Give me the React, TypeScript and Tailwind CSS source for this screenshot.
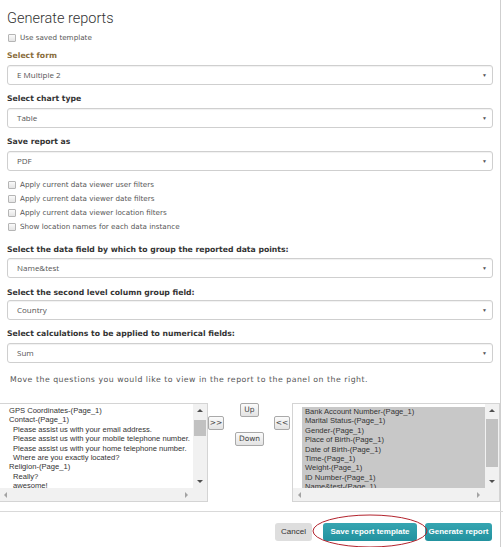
import React from 'react';

const labelCls = "h-[12px] flex items-center text-[7.7px] font-bold text-[#333] [font-family:'DejaVu_Sans',sans-serif]";

const Select = ({ value, className = '' }: { value: string; className?: string }) => (
  <div
    className={`h-[20px] w-[486px] flex items-center justify-between pl-[9px] pr-[5px] border border-[#cfcfcf] rounded-[3px] bg-white shadow-[inset_0_1px_1px_rgba(0,0,0,0.06)] ${className}`}
  >
    <span className="text-[8px] text-[#555] [font-family:'Open_Sans',sans-serif]">{value}</span>
    <span className="text-[5px] text-[#555] leading-none">▼</span>
  </div>
);

const Check = ({ label, className = '' }: { label: string; className?: string }) => (
  <div className={`h-[14px] flex items-center gap-[4px] ${className}`}>
    <span className="w-[8px] h-[8px] border border-[#b5b5b5] rounded-[1px] bg-gradient-to-b from-[#fafafa] to-[#e4e4e4]" />
    <span className="text-[7.2px] text-[#555] [font-family:'DejaVu_Sans',sans-serif]">{label}</span>
  </div>
);

const MiniBtn = ({ label, className = '' }: { label: string; className?: string }) => (
  <div
    className={`h-[14px] px-[3px] flex items-center justify-center border border-[#a9a9a9] rounded-[2px] bg-gradient-to-b from-[#fbfbfb] to-[#e3e3e3] text-[7.5px] text-[#444] [font-family:'DejaVu_Sans',sans-serif] ${className}`}
  >
    {label}
  </div>
);

type Item = { text: string; indent?: boolean };

const ListBox = ({
  items,
  selected,
  className = '',
  thumbTop,
  thumbH,
}: {
  items: Item[];
  selected?: boolean;
  className?: string;
  thumbTop: number;
  thumbH: number;
}) => (
  <div className={`h-[99px] flex flex-col border border-[#d4d4d4] bg-white ${className}`}>
    <div className="flex flex-1 min-h-0">
      <div className={`flex-1 min-w-0 overflow-hidden ${selected ? 'pl-[9px] pt-[3px]' : 'pl-[7px] pt-[2px]'}`}>
        <div className={`h-full pl-[3px] ${selected ? 'bg-[#c8c8c8]' : ''}`}>
          {items.map((it) => (
            <div
              key={it.text}
              className={`h-[9.4px] leading-[9.4px] whitespace-nowrap text-[7.6px] text-[#333] [font-family:'Liberation_Sans',Arial,sans-serif] ${it.indent ? 'pl-[4px]' : ''}`}
            >
              {it.text}
            </div>
          ))}
        </div>
      </div>
      <div className="w-[14px] relative bg-[#f1f1f1]">
        <span className="absolute top-[5px] left-[4px] w-0 h-0 border-x-[3px] border-x-transparent border-b-[3px] border-b-[#505050]" />
        <span
          className="absolute left-[1px] right-[1px] bg-[#c1c1c1]"
          style={{ top: thumbTop, height: thumbH }}
        />
        <span className="absolute bottom-[5px] left-[4px] w-0 h-0 border-x-[3px] border-x-transparent border-t-[3px] border-t-[#505050]" />
      </div>
    </div>
    <div className="h-[13px] flex">
      <div className="flex-1 flex items-center justify-between px-[5px] bg-[#f1f1f1]">
        <span className="w-0 h-0 border-y-[3px] border-y-transparent border-r-[3px] border-r-[#a3a3a3]" />
        <span className="w-0 h-0 border-y-[3px] border-y-transparent border-l-[3px] border-l-[#a3a3a3]" />
      </div>
      <div className="w-[14px] bg-[#f1f1f1]" />
    </div>
  </div>
);

const leftItems: Item[] = [
  { text: 'GPS Coordinates-(Page_1)' },
  { text: 'Contact-(Page_1)' },
  { text: 'Please assist us with your email address.', indent: true },
  { text: 'Please assist us with your mobile telephone number.', indent: true },
  { text: 'Please assist us with your home telephone number.', indent: true },
  { text: 'Where are you exactly located?', indent: true },
  { text: 'Religion-(Page_1)' },
  { text: 'Really?', indent: true },
  { text: 'awesome!', indent: true },
];

const rightItems: Item[] = [
  { text: 'Bank Account Number-(Page_1)' },
  { text: 'Marital Status-(Page_1)' },
  { text: 'Gender-(Page_1)' },
  { text: 'Place of Birth-(Page_1)' },
  { text: 'Date of Birth-(Page_1)' },
  { text: 'Time-(Page_1)' },
  { text: 'Weight-(Page_1)' },
  { text: 'ID Number-(Page_1)' },
  { text: 'Name&test-(Page_1)' },
];

export default function App() {
  return (
    <div className="w-[503px] h-[547px] bg-white overflow-hidden">
      <div className="w-[501px] h-[547px] border-r border-[#cfcfcf] relative">
        <div className="pl-[7px] flex flex-col">
          <h1 className="mt-[6px] h-[26px] leading-[26px] text-[14.5px] font-light text-[#333] [font-family:Roboto,sans-serif]">
            Generate reports
          </h1>
          <Check label="Use saved template" className="mt-[-1px] ml-[1px]" />
          <div className={`${labelCls} mt-[5px] !text-[#8a6d3b]`}>Select form</div>
          <Select value="E Multiple 2" className="mt-[3px]" />
          <div className={`${labelCls} mt-[8px]`}>Select chart type</div>
          <Select value="Table" className="mt-[3px]" />
          <div className={`${labelCls} mt-[8px]`}>Save report as</div>
          <Select value="PDF" className="mt-[3px]" />
          <div className="mt-[7px] ml-[1px] flex flex-col">
            <Check label="Apply current data viewer user filters" />
            <Check label="Apply current data viewer date filters" />
            <Check label="Apply current data viewer location filters" />
            <Check label="Show location names for each data instance" />
          </div>
          <div className={`${labelCls} mt-[10px]`}>
            Select the data field by which to group the reported data points:
          </div>
          <Select value="Name&test" className="mt-[2px]" />
          <div className={`${labelCls} mt-[9px]`}>Select the second level column group field:</div>
          <Select value="Country" className="mt-[1px]" />
          <div className={`${labelCls} mt-[8px]`}>Select calculations to be applied to numerical fields:</div>
          <Select value="Sum" className="mt-[3px]" />
          <div className="mt-[11px] h-[12px] flex items-center pl-[3px] text-[7.8px] tracking-[0.5px] text-[#555] [font-family:'DejaVu_Sans',sans-serif]">
            Move the questions you would like to view in the report to the panel on the right.
          </div>
        </div>

        <div className="mt-[17px] flex items-start">
          <ListBox items={leftItems} className="w-[210px] ml-[-1px] border-l-0" thumbTop={16} thumbH={16} />
          <MiniBtn label=">>" className="mt-[13px] w-[16px]" />
          <div className="ml-[11px] flex flex-col items-center">
            <MiniBtn label="Up" className="w-[19px]" />
            <MiniBtn label="Down" className="mt-[15px] w-[29px]" />
          </div>
          <MiniBtn label="<<" className="mt-[13px] ml-[10px] w-[16px]" />
          <ListBox items={rightItems} selected className="ml-[2px] w-[209px]" thumbTop={15} thumbH={48} />
        </div>

        <div className="mt-[9px] h-px w-[503px] bg-[#d9d9d9]" />

        <div className="mt-[11px] flex justify-end items-center pr-[8px] gap-[8px] relative">
          <div className="h-[18px] w-[37px] flex items-center justify-center rounded-[3px] bg-[#dedede] text-[8px] text-[#333] [font-family:'Liberation_Sans',Arial,sans-serif]">
            Cancel
          </div>
          <div className="ml-[3px] h-[18px] w-[94px] flex items-center justify-center rounded-[3px] bg-gradient-to-b from-[#35a5b1] to-[#22929f] text-[8px] font-bold text-white [font-family:'Liberation_Sans',Arial,sans-serif]">
            Save report template
          </div>
          <div className="h-[18px] w-[67px] flex items-center justify-center rounded-[3px] bg-gradient-to-b from-[#35a5b1] to-[#22929f] text-[8px] font-bold text-white [font-family:'Liberation_Sans',Arial,sans-serif]">
            Generate report
          </div>
          <svg className="absolute left-[312px] top-[-9px] pointer-events-none" width="116" height="34" viewBox="0 0 116 34">
            <ellipse cx="58" cy="17" rx="57" ry="16" fill="none" stroke="#b3232d" strokeWidth="1" />
          </svg>
        </div>
      </div>
    </div>
  );
}
